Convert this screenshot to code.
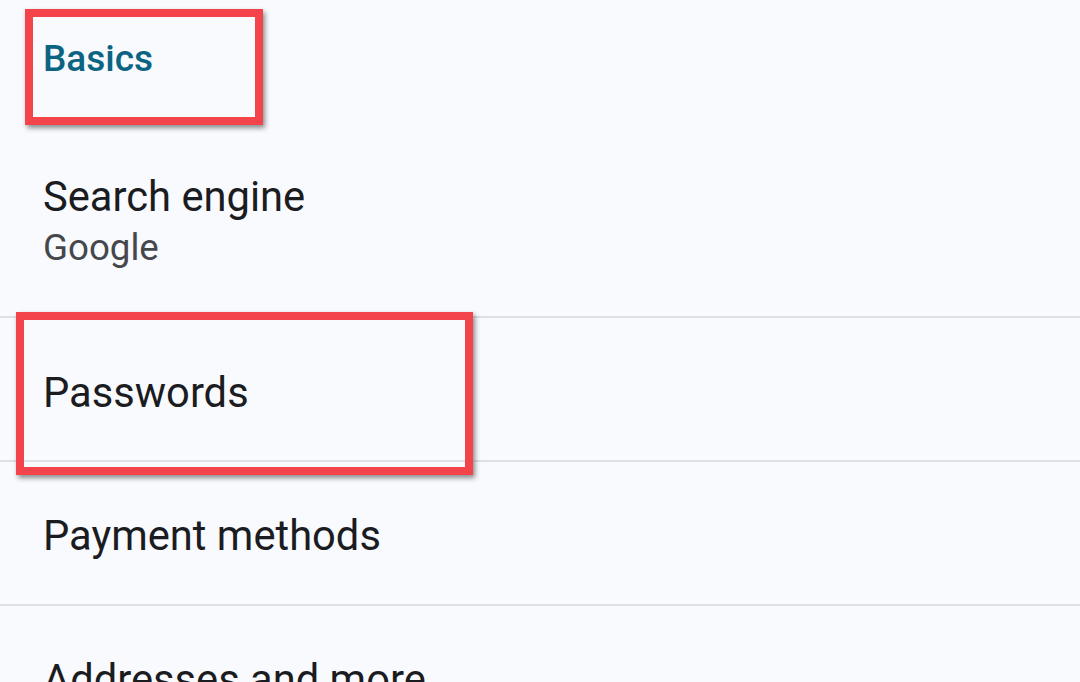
import React from "react";

const font = { fontFamily: "Roboto, 'Noto Sans', Arial, sans-serif" };

function Divider() {
  return <div className="h-[2px] w-full bg-[#dce1e7]" />;
}

export default function App() {
  return (
    <div
      className="relative w-[1080px] h-[682px] overflow-hidden bg-[#f9fafd]"
      style={font}
    >
      <div className="h-[124px] pl-[43px] pt-[40px]">
        <div className="text-[37px] leading-none font-medium text-[#0b6482]">Basics</div>
      </div>
      <div className="h-[192px] pl-[43px] pt-[52px]">
        <div className="text-[41.7px] leading-none text-[#1b1c1f]">Search engine</div>
        <div className="mt-[12px] text-[36.7px] leading-none text-[#45474c]">Google</div>
      </div>
      <Divider />
      <div className="h-[142px] pl-[43px] pt-[54px]">
        <div className="text-[41.7px] leading-none text-[#1b1c1f]">Passwords</div>
      </div>
      <Divider />
      <div className="h-[142px] pl-[43px] pt-[53px]">
        <div className="text-[41.7px] leading-none text-[#1b1c1f]">Payment methods</div>
      </div>
      <Divider />
      <div className="h-[142px] pl-[43px] pt-[53px]">
        <div className="text-[41.7px] leading-none text-[#1b1c1f]">Addresses and more</div>
      </div>

      <div className="absolute left-[25px] top-[9px] w-[238px] h-[116px] border-[8px] border-[#f2444a] shadow-[2px_3px_5px_rgba(0,0,0,0.45)]" />
      <div className="absolute left-[16px] top-[312px] w-[457px] h-[163px] border-[8px] border-[#f2444a] shadow-[2px_3px_5px_rgba(0,0,0,0.45)]" />
    </div>
  );
}
